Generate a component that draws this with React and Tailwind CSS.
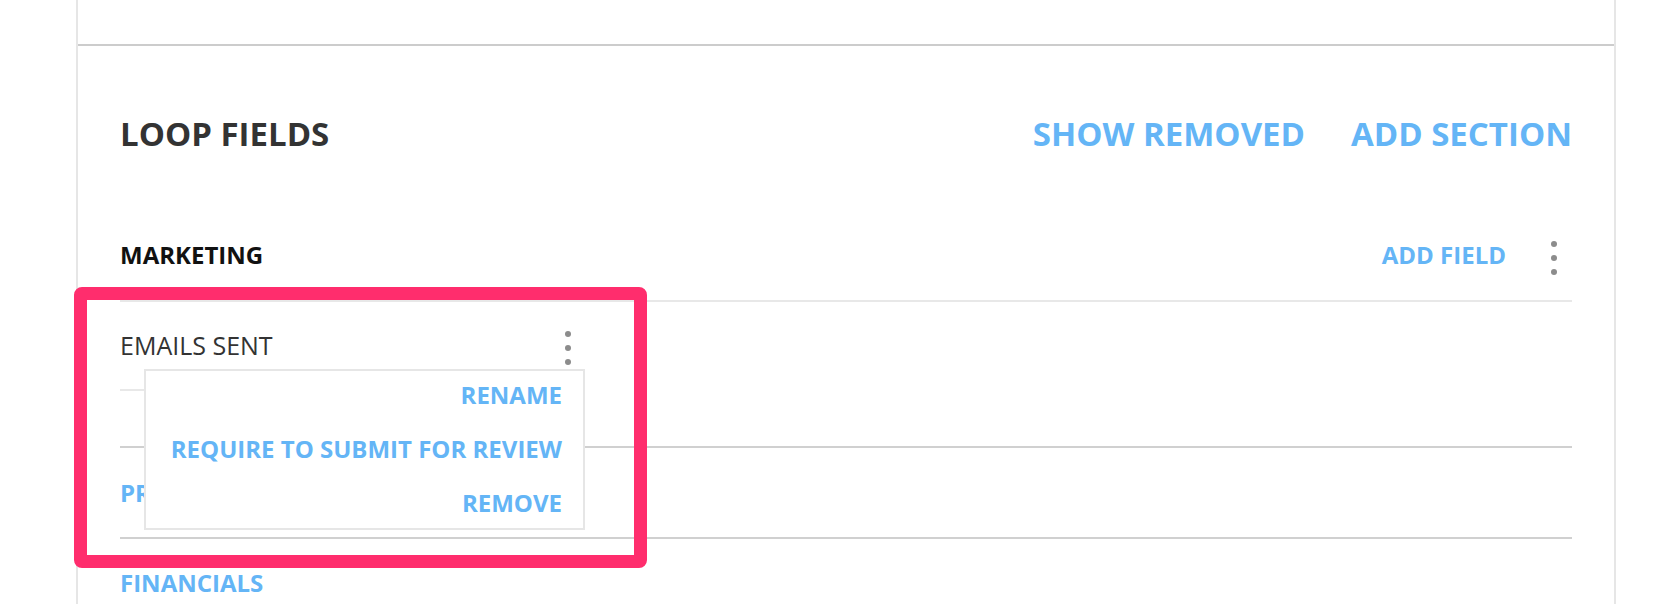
import React from 'react';

function Kebab({ className = '' }) {
    return (
        <div className={`flex w-[24px] flex-col items-center gap-[8px] ${className}`}>
            <span className="block h-[6px] w-[6px] rounded-full bg-[#8c8c8c]"></span>
            <span className="block h-[6px] w-[6px] rounded-full bg-[#8c8c8c]"></span>
            <span className="block h-[6px] w-[6px] rounded-full bg-[#8c8c8c]"></span>
        </div>
    );
}

export default function App() {
    const menu = ['RENAME', 'REQUIRE TO SUBMIT FOR REVIEW', 'REMOVE'];

    return (
        <div className="relative h-[604px] w-full overflow-hidden bg-white font-['Open_Sans',sans-serif]">
            <div className="ml-[76px] h-full w-[1540px] border-x-2 border-[#e6e6e6]">
                {/* top strip */}
                <div className="h-[46px] border-b-2 border-[#cccccc]"></div>

                <div className="px-[42px] pt-[55px]">
                    {/* Title row */}
                    <div className="flex h-16 items-center justify-between">
                        <h2 className="text-[33px] font-bold leading-none text-[#333333]">LOOP FIELDS</h2>
                        <div className="flex items-center gap-[46px] text-[33px] font-bold leading-none text-[#64b5f6]">
                            <span>SHOW REMOVED</span>
                            <span>ADD SECTION</span>
                        </div>
                    </div>

                    {/* Marketing section */}
                    <div className="mt-[45px] border-b-2 border-[#d0d0d0]">
                        <div className="flex h-[92px] items-center justify-between border-b-2 border-[#e8e8e8]">
                            <span className="text-[24px] font-bold leading-none text-[#111111]">MARKETING</span>
                            <div className="flex items-center gap-[36px]">
                                <span className="text-[24px] font-bold leading-none text-[#64b5f6]">ADD FIELD</span>
                                <Kebab className="mr-[6px] mt-[6px]" />
                            </div>
                        </div>
                        <div className="flex h-[89px] w-[460px] items-center justify-between border-b-2 border-[#e8e8e8]">
                            <span className="text-[25px] leading-none text-[#333333]">EMAILS SENT</span>
                            <Kebab className="mt-[4px]" />
                        </div>
                        <div className="h-[55px]"></div>
                    </div>

                    <div className="flex h-[91px] items-center border-b-2 border-[#d0d0d0]">
                        <span className="text-[24px] font-bold leading-none text-[#64b5f6]">PROPERTY</span>
                    </div>
                    <div className="flex h-[87px] items-center">
                        <span className="text-[24px] font-bold leading-none text-[#64b5f6]">FINANCIALS</span>
                    </div>
                </div>
            </div>

            {/* Field menu */}
            <div className="absolute left-[144px] top-[369px] flex w-[441px] flex-col gap-[7px] border-2 border-[#e6e6e6] bg-white pb-[2px] pr-[21px]">
                {menu.map((item) => (
                    <div key={item} className="flex h-[47px] items-center justify-end text-[24px] font-bold leading-none text-[#64b5f6]">
                        {item}
                    </div>
                ))}
            </div>

            {/* Highlight */}
            <div className="pointer-events-none absolute left-[74px] top-[287px] h-[281px] w-[573px] rounded-[8px] border-[13px] border-[#ff2d6d]"></div>
        </div>
    );
}
